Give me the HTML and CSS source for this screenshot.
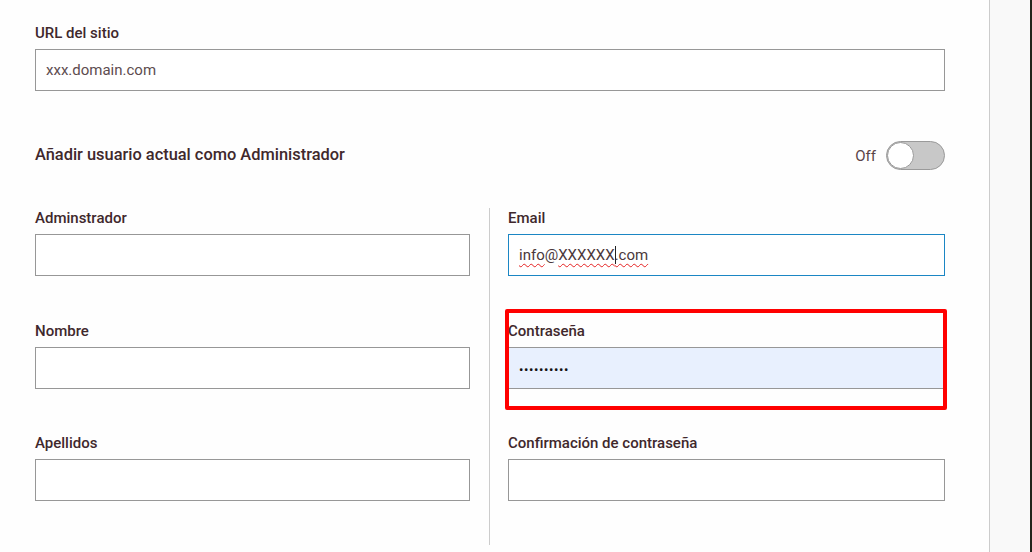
FILE: index.html
```html
<!DOCTYPE html>
<html lang="es">
<head>
<meta charset="utf-8">
<title>Sitio</title>
<link rel="stylesheet" href="styles.css">
</head>
<body>
<div class="app">
  <main class="main">
    <div class="form">
      <div class="field">
        <label class="label">URL del sitio</label>
        <div class="input"><span class="value muted">xxx.domain.com</span></div>
      </div>

      <div class="toggle-row">
        <span class="toggle-title">Añadir usuario actual como Administrador</span>
        <div class="toggle-wrap">
          <span class="toggle-state">Off</span>
          <span class="toggle"><span class="knob"></span></span>
        </div>
      </div>

      <div class="columns">
        <div class="col">
          <div class="field">
            <label class="label">Adminstrador</label>
            <div class="input"></div>
          </div>
          <div class="field shift">
            <label class="label">Nombre</label>
            <div class="input"></div>
          </div>
          <div class="field">
            <label class="label">Apellidos</label>
            <div class="input"></div>
          </div>
        </div>
        <div class="divider"></div>
        <div class="col col-right">
          <div class="field">
            <label class="label">Email</label>
            <div class="input focused"><span class="value"><span class="spell">info</span>@<span class="spell">XXXXXX<span class="caret"></span>.com</span></span></div>
          </div>
          <div class="field shift highlighted">
            <label class="label">Contraseña</label>
            <div class="input autofill"><span class="dots">••••••••••</span></div>
            <div class="annotation"></div>
          </div>
          <div class="field">
            <label class="label">Confirmación de contraseña</label>
            <div class="input"></div>
          </div>
        </div>
      </div>
    </div>
  </main>
  <aside class="side"></aside>
  <div class="edge"></div>
</div>
</body>
</html>
```

FILE: styles.css
```css
* { box-sizing: border-box; }
html, body { margin: 0; padding: 0; }
body {
  font-family: Roboto, "Noto Sans", "Liberation Sans", sans-serif;
  color: #40282c;
  background: #fefefe;
  width: 1032px;
  height: 552px;
  overflow: hidden;
}
.app {
  display: flex;
  height: 552px;
}
.main {
  width: 990px;
  border-right: 1px solid #cccccc;
  background: #fefefe;
  padding: 23px 0 0 35px;
}
.form {
  width: 910px;
}
.field {
  display: flex;
  flex-direction: column;
}
.label {
  font-size: 15px;
  font-weight: 500;
  line-height: 20px;
  margin-bottom: 6px;
  color: #40282c;
}
.input {
  height: 42px;
  border: 1px solid #979797;
  background: #ffffff;
  display: flex;
  align-items: center;
  padding: 0 10px;
}
.value {
  font-size: 15px;
  color: #4b383b;
  position: relative;
}
.value.muted {
  color: #5d4c4f;
}
.spell {
  text-decoration: underline wavy #e52222;
  text-decoration-thickness: 1px;
  text-underline-offset: 3px;
}
.caret {
  display: inline-block;
  width: 1px;
  height: 18px;
  background: #222;
  vertical-align: -4px;
  margin-right: -1px;
}
.focused {
  border-color: #1b86c4;
}
.autofill {
  background: #e8f0fe;
}
.dots {
  font-size: 13px;
  color: #111;
  letter-spacing: 0.6px;
  margin-top: 2px;
}
.toggle-row {
  display: flex;
  align-items: center;
  justify-content: space-between;
  margin-top: 50px;
  height: 29px;
}
.toggle-title {
  font-size: 16.4px;
  font-weight: 500;
  margin-top: -2px;
}
.toggle-wrap {
  display: flex;
  align-items: center;
  gap: 10px;
}
.toggle-state {
  font-size: 15px;
  color: #5a4447;
}
.toggle {
  width: 59px;
  height: 29px;
  border-radius: 15px;
  background: #c8c8c8;
  border: 1px solid #9a9a9a;
  display: flex;
  align-items: center;
}
.knob {
  width: 27px;
  height: 27px;
  border-radius: 50%;
  background: #ffffff;
  border: 1.5px solid #9a9a9a;
}
.columns {
  display: flex;
  margin-top: 38px;
  height: 337px;
}
.col {
  width: 435px;
  display: flex;
  flex-direction: column;
  gap: 44px;
}
.shift {
  margin-top: 1px;
}
.col-right {
  width: 437px;
}
.divider {
  width: 1px;
  background: #cccccc;
  margin: 0 18px 0 19px;
}
.highlighted {
  position: relative;
}
.annotation {
  position: absolute;
  left: -3px;
  top: -12px;
  width: 442px;
  height: 101px;
  border: 4px solid #ff0000;
  border-radius: 2px;
}
.side {
  width: 40px;
  background: #f9f9f9;
}
.edge {
  width: 2px;
  background: #23241c;
}
```
